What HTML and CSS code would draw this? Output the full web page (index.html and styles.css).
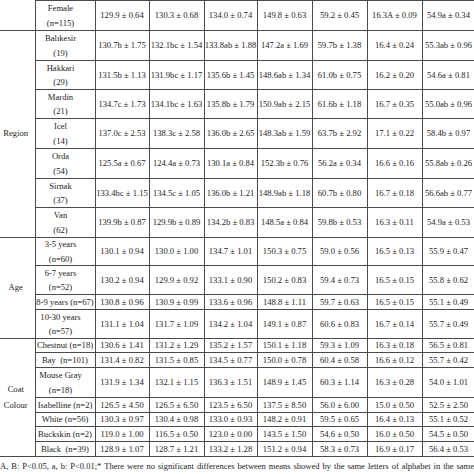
FILE: index.html
```html
<!DOCTYPE html>
<html>
<head>
<meta charset="utf-8">
<title>Table</title>
<link rel="stylesheet" href="styles.css">
</head>
<body>
<div class="page">
<table class="data">
<colgroup>
<col class="w35"><col class="w60"><col class="w54"><col class="w55"><col class="w53"><col class="w55"><col class="w55"><col class="w55"><col class="w53">
</colgroup>
<tbody>
<tr class="h30"><td class="grp first"></td><td class="lbl wrap"><span class="two">Female<br>(n=115)</span></td><td>129.9 ± 0.64</td><td>130.3 ± 0.68</td><td>134.0 ± 0.74</td><td>149.8 ± 0.63</td><td>59.2 ± 0.45</td><td>16.3A ± 0.09</td><td>54.9a ± 0.34</td></tr>

<tr class="h30"><td class="grp" rowspan="7">Region</td><td class="lbl wrap"><span class="two">Balıkesir<br>(19)</span></td><td>130.7b ± 1.75</td><td>132.1bc ± 1.54</td><td>133.8ab ± 1.88</td><td>147.2a ± 1.69</td><td>59.7b ± 1.38</td><td>16.4 ± 0.24</td><td>55.3ab ± 0.96</td></tr>
<tr class="h29"><td class="lbl wrap"><span class="two">Hakkari<br>(29)</span></td><td>131.5b ± 1.13</td><td>131.9bc ± 1.17</td><td>135.6b ± 1.45</td><td>148.6ab ± 1.34</td><td>61.0b ± 0.75</td><td>16.2 ± 0.20</td><td>54.6a ± 0.81</td></tr>
<tr class="h29"><td class="lbl wrap"><span class="two">Mardin<br>(21)</span></td><td>134.7c ± 1.73</td><td>134.1bc ± 1.63</td><td>135.8b ± 1.79</td><td>150.9ab ± 2.15</td><td>61.6b ± 1.18</td><td>16.7 ± 0.35</td><td>55.0ab ± 0.96</td></tr>
<tr class="h30"><td class="lbl wrap"><span class="two">Icel<br>(14)</span></td><td>137.0c ± 2.53</td><td>138.3c ± 2.58</td><td>136.0b ± 2.65</td><td>148.3ab ± 1.59</td><td>63.7b ± 2.92</td><td>17.1 ± 0.22</td><td>58.4b ± 0.97</td></tr>
<tr class="h30"><td class="lbl wrap"><span class="two">Orda<br>(54)</span></td><td>125.5a ± 0.67</td><td>124.4a ± 0.73</td><td>130.1a ± 0.84</td><td>152.3b ± 0.76</td><td>56.2a ± 0.34</td><td>16.6 ± 0.16</td><td>55.8ab ± 0.26</td></tr>
<tr class="h29"><td class="lbl wrap"><span class="two">Sirnak<br>(37)</span></td><td>133.4bc ± 1.15</td><td>134.5c ± 1.05</td><td>136.0b ± 1.21</td><td>148.9ab ± 1.18</td><td>60.7b ± 0.80</td><td>16.7 ± 0.18</td><td>56.6ab ± 0.77</td></tr>
<tr class="h30"><td class="lbl wrap"><span class="two">Van<br>(62)</span></td><td>139.9b ± 0.87</td><td>129.9b ± 0.89</td><td>134.2b ± 0.83</td><td>148.5a ± 0.84</td><td>59.8b ± 0.53</td><td>16.3 ± 0.11</td><td>54.9a ± 0.53</td></tr>

<tr class="h28"><td class="grp" rowspan="4">Age</td><td class="lbl wrap"><span class="two">3-5 years<br>(n=60)</span></td><td>130.1 ± 0.94</td><td>130.0 ± 1.00</td><td>134.7 ± 1.01</td><td>150.3 ± 0.75</td><td>59.0 ± 0.56</td><td>16.5 ± 0.13</td><td>55.9 ± 0.47</td></tr>
<tr class="h29"><td class="lbl wrap"><span class="two">6-7 years<br>(n=52)</span></td><td>130.2 ± 0.94</td><td>129.9 ± 0.92</td><td>133.1 ± 0.90</td><td>150.2 ± 0.83</td><td>59.4 ± 0.73</td><td>16.5 ± 0.15</td><td>55.8 ± 0.62</td></tr>
<tr class="h15"><td class="lbl">8-9 years (n=67)</td><td>130.8 ± 0.96</td><td>130.9 ± 0.99</td><td>133.6 ± 0.96</td><td>148.8 ± 1.11</td><td>59.7 ± 0.63</td><td>16.5 ± 0.15</td><td>55.1 ± 0.49</td></tr>
<tr class="h29"><td class="lbl wrap"><span class="two">10-30 years<br>(n=57)</span></td><td>131.1 ± 1.04</td><td>131.7 ± 1.09</td><td>134.2 ± 1.04</td><td>149.1 ± 0.87</td><td>60.6 ± 0.83</td><td>16.7 ± 0.14</td><td>55.7 ± 0.49</td></tr>

<tr class="h14"><td class="grp" rowspan="7">Coat<br>Colour</td><td class="lbl">Chestnut (n=18)</td><td>130.6 ± 1.41</td><td>131.2 ± 1.29</td><td>135.2 ± 1.57</td><td>150.1 ± 1.18</td><td>59.3 ± 1.09</td><td>16.3 ± 0.18</td><td>56.5 ± 0.81</td></tr>
<tr class="h15"><td class="lbl">Bay&nbsp; (n=101)</td><td>131.4 ± 0.82</td><td>131.5 ± 0.85</td><td>134.5 ± 0.77</td><td>150.0 ± 0.78</td><td>60.4 ± 0.58</td><td>16.6 ± 0.12</td><td>55.7 ± 0.42</td></tr>
<tr class="h30"><td class="lbl wrap"><span class="two">Mouse Gray<br>(n=18)</span></td><td>131.9 ± 1.34</td><td>132.1 ± 1.15</td><td>136.3 ± 1.51</td><td>148.9 ± 1.45</td><td>60.3 ± 1.14</td><td>16.3 ± 0.28</td><td>54.0 ± 1.01</td></tr>
<tr class="h15"><td class="lbl">Isabelline (n=2)</td><td>126.5 ± 4.50</td><td>126.5 ± 6.50</td><td>123.5 ± 6.50</td><td>137.5 ± 8.50</td><td>56.0 ± 6.00</td><td>15.0 ± 0.50</td><td>52.5 ± 2.50</td></tr>
<tr class="h14"><td class="lbl">White (n=56)</td><td>130.3 ± 0.97</td><td>130.4 ± 0.98</td><td>133.0 ± 0.93</td><td>148.2 ± 0.91</td><td>59.5 ± 0.65</td><td>16.4 ± 0.13</td><td>55.1 ± 0.52</td></tr>
<tr class="h15"><td class="lbl">Buckskin (n=2)</td><td>119.0 ± 1.00</td><td>116.5 ± 0.50</td><td>123.0 ± 0.00</td><td>143.5 ± 1.50</td><td>54.6 ± 0.50</td><td>16.0 ± 0.50</td><td>54.5 ± 0.50</td></tr>
<tr class="h15"><td class="lbl">Black&nbsp; (n=39)</td><td>128.9 ± 1.07</td><td>128.7 ± 1.21</td><td>133.2 ± 1.28</td><td>151.2 ± 0.94</td><td>58.3 ± 0.73</td><td>16.9 ± 0.17</td><td>56.4 ± 0.53</td></tr>
</tbody>
</table>
<p class="note">A, B: P&lt;0.05, a, b: P&lt;0.01;* There were no significant differences between means showed by the same letters of alphabet in the same</p>
</div>
</body>
</html>
```

FILE: styles.css
```css
html, body {
  margin: 0;
  padding: 0;
  background: #ffffff;
  overflow: hidden;
}

.page {
  width: 474px;
  height: 474px;
  overflow: hidden;
  font-family: "Liberation Serif", "Times New Roman", serif;
  color: #222222;
}

.data {
  border-collapse: collapse;
  table-layout: fixed;
  width: 475px;
  font-size: 8.6px;
}

.w35 { width: 35px; }
.w60 { width: 60px; }
.w54 { width: 54px; }
.w55 { width: 55px; }
.w53 { width: 53px; }

.data td {
  border: 1px solid #4a4a4a;
  padding: 0;
  text-align: center;
  vertical-align: middle;
  line-height: 11px;
  white-space: nowrap;
  overflow: hidden;
}

.data tr.h14 { height: 14px; }
.data tr.h15 { height: 15px; }
.data tr.h28 { height: 28px; }
.data tr.h29 { height: 29px; }
.data tr.h30 { height: 30px; }

.data td.grp {
  border-left: none;
  padding-right: 3px;
  line-height: 15.5px;
}

.data td.first {
  border-top: none;
}

.data td.lbl.wrap {
  padding-right: 9px;
}

.two {
  display: block;
  line-height: 14.5px;
  margin: -2px 0;
}

.note {
  margin: 3px 0 0 0;
  width: 474px;
  font-size: 8.5px;
  line-height: 12px;
  white-space: nowrap;
  text-align: justify;
  text-align-last: justify;
}
```
